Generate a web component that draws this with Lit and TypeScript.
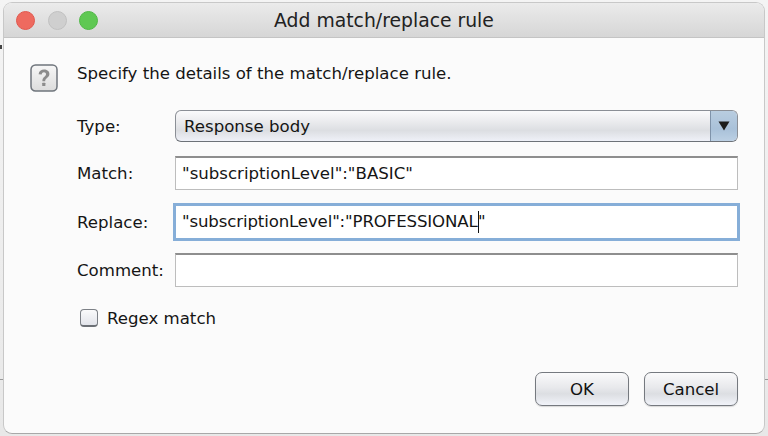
import { LitElement, html, css } from "lit";
import { customElement } from "lit/decorators.js";

@customElement("app-root")
export class AppRoot extends LitElement {
  static styles = css`
    :host {
      display: block;
      width: 768px;
      height: 436px;
      box-sizing: border-box;
      padding: 2px 3px 2px 3px;
      background: linear-gradient(#f4f4f4, #e8e8e8);
      font-family: "DejaVu Sans", sans-serif;
      font-size: 16.6px;
      line-height: 19px;
      color: #151515;
      overflow: hidden;
      position: relative;
    }
    .edge {
      position: absolute;
      left: 0;
      right: 0;
      top: 379px;
      height: 1px;
      background: #9a9a9a;
    }
    .mark {
      position: absolute;
      left: 0;
      top: 45px;
      width: 2px;
      height: 4px;
      background: #444;
    }
    .window {
      position: relative;
      height: 100%;
      box-sizing: border-box;
      border: 1px solid #c8c8c8;
      border-bottom-color: #a8a8a8;
      border-radius: 9px;
      background: #fbfbfb;
      overflow: hidden;
      display: flex;
      flex-direction: column;
    }
    .titlebar {
      height: 34px;
      flex: none;
      position: relative;
      display: flex;
      align-items: center;
      justify-content: center;
      background: linear-gradient(#ebebeb, #d6d6d6);
      border-bottom: 1px solid #c4c4c4;
      font-size: 18.8px;
      color: #222;
    }
    .lights {
      position: absolute;
      left: 12px;
      top: 8px;
      display: flex;
      gap: 12.5px;
    }
    .light {
      width: 19px;
      height: 19px;
      border-radius: 50%;
      box-sizing: border-box;
    }
    .red { background: #ee6a5f; border: 1px solid #e0584e; }
    .grey { background: #cfcfcf; border: 1px solid #c0c0c0; }
    .green { background: #5fc853; border: 1px solid #50b847; }
    .body {
      flex: 1;
      padding: 26px 26px 27px 26px;
      display: flex;
      flex-direction: column;
      min-height: 0;
    }
    .intro {
      display: flex;
      align-items: flex-start;
      gap: 19px;
      height: 29px;
    }
    .qicon { flex: none; display: block; }
    .form {
      margin: 17px 0 0 47px;
      display: flex;
      flex-direction: column;
    }
    .row {
      display: flex;
      align-items: center;
    }
    .row.r-match { margin-top: 14px; }
    .row.r-replace { margin-top: 13px; }
    .row.r-comment { margin-top: 12px; }
    .label { flex: none; width: 98px; }
    .combo {
      flex: 1;
      height: 32px;
      box-sizing: border-box;
      border: 1px solid #8b8f96;
      border-bottom-color: #6d7278;
      border-radius: 6px;
      background: linear-gradient(#fbfbfc 0%, #e6e7ea 45%, #dcdee2 65%, #eff1f8 100%);
      display: flex;
      align-items: center;
      overflow: hidden;
      padding-left: 8px;
    }
    .combo-text { flex: 1; }
    .arrow {
      flex: none;
      width: 26px;
      height: 100%;
      display: flex;
      align-items: center;
      justify-content: center;
      border-left: 1px solid #7f93aa;
      background: linear-gradient(#b9cde0, #a9c1d9 60%, #bcd0e4);
    }
    .input {
      flex: 1;
      height: 34px;
      box-sizing: border-box;
      background: #fff;
      border: 1px solid #bdbdbd;
      border-top: 2px solid #8e8e8e;
      padding: 0 6px;
      display: flex;
      align-items: center;
      white-space: pre;
    }
    .input.focus {
      height: 38px;
      margin: 0 -2px;
      border: 3px solid #86aed8;
      padding: 0 5px 0 6px;
      letter-spacing: -0.14px;
    }
    .caret {
      display: inline-block;
      width: 1.5px;
      height: 22px;
      margin-right: -1px;
      background: #111;
      vertical-align: middle;
    }
    .check {
      margin: 22px 0 0 50px;
      display: flex;
      align-items: center;
      gap: 9px;
      height: 18px;
    }
    .box {
      width: 18px;
      height: 18px;
      box-sizing: border-box;
      border: 1px solid #7c8086;
      border-bottom: 2px solid #6b6f75;
      border-radius: 4px;
      background: linear-gradient(#fafafb, #e2e4ea);
    }
    .actions {
      margin-top: auto;
      display: flex;
      justify-content: flex-end;
      gap: 15px;
    }
    .btn {
      width: 94px;
      height: 34px;
      box-sizing: border-box;
      border: 1px solid #75797f;
      border-radius: 7px;
      background: linear-gradient(#fafafb 0%, #e8e9ec 45%, #dcdee2 65%, #f1f3f9 100%);
      box-shadow: 0 1px 1px #d8d8d8;
      display: flex;
      align-items: center;
      justify-content: center;
      font: inherit;
      color: #111;
      padding: 0;
    }
  `;

  render() {
    return html`
      <div class="edge"></div>
      <div class="mark"></div>
      <div class="window">
        <div class="titlebar">
          <div class="lights">
            <div class="light red"></div>
            <div class="light grey"></div>
            <div class="light green"></div>
          </div>
          Add match/replace rule
        </div>
        <div class="body">
          <div class="intro">
            <svg class="qicon" width="28" height="29" viewBox="0 0 28 29">
              <defs>
                <linearGradient id="q" x1="0" y1="0" x2="0" y2="1">
                  <stop offset="0" stop-color="#f7f7f7" />
                  <stop offset="1" stop-color="#dcdcdc" />
                </linearGradient>
              </defs>
              <rect x="1" y="1" width="26" height="26" rx="4.5" fill="url(#q)" stroke="#6f757c" stroke-width="1.5" />
              <path d="M8.6 10.2c.3-3.1 2.6-4.6 5.4-4.6 3 0 5.4 1.7 5.4 4.4 0 3.7-4.2 3.9-4.2 7.2h-2.8c-.2-4.2 3.6-4.6 3.6-7 0-1.2-.9-1.9-2-1.9-1.3 0-2.1.8-2.3 2.2z" fill="#8c8c8c" />
              <rect x="12.2" y="18.7" width="3.2" height="3.3" rx=".6" fill="#8c8c8c" />
            </svg>
            <span>Specify the details of the match/replace rule.</span>
          </div>
          <div class="form">
            <div class="row">
              <span class="label">Type:</span>
              <div class="combo">
                <span class="combo-text">Response body</span>
                <span class="arrow">
                  <svg width="12" height="10" viewBox="0 0 12 10"><path d="M0.5 0.5h11L6 9.5z" fill="#1c1c1c" /></svg>
                </span>
              </div>
            </div>
            <div class="row r-match">
              <span class="label">Match:</span>
              <div class="input">"subscriptionLevel":"BASIC"</div>
            </div>
            <div class="row r-replace">
              <span class="label">Replace:</span>
              <div class="input focus"><span>"subscriptionLevel":"PROFESSIONAL<span class="caret"></span>"</span></div>
            </div>
            <div class="row r-comment">
              <span class="label">Comment:</span>
              <div class="input"></div>
            </div>
          </div>
          <div class="check">
            <div class="box"></div>
            <span>Regex match</span>
          </div>
          <div class="actions">
            <button class="btn">OK</button>
            <button class="btn">Cancel</button>
          </div>
        </div>
      </div>
    `;
  }
}
